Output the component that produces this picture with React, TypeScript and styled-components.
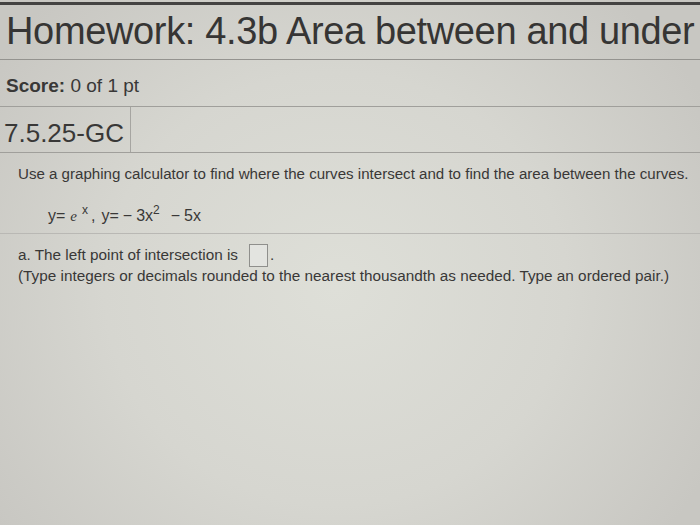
import React from 'react';
import styled, { createGlobalStyle } from 'styled-components';

const GlobalStyle = createGlobalStyle`
  html, body {
    margin: 0;
    padding: 0;
  }
  body {
    font-family: "Liberation Sans", Arial, sans-serif;
    color: #393837;
  }
`;

const Page = styled.div`
  min-height: 525px;
  width: 700px;
  overflow: hidden;
  padding-top: 2px;
  box-sizing: border-box;
  background: radial-gradient(ellipse 60% 75% at 48% 55%, #dedfd8 0%, #d6d6d0 55%, #c8c7c2 100%);
`;

const TitleBar = styled.div`
  border-top: 3px solid #444342;
  border-bottom: 1px solid #94938f;
  height: 58px;
  box-sizing: border-box;
  padding: 7px 0 0 6px;
`;

const Title = styled.h1`
  margin: 0;
  font-size: 38px;
  line-height: 38px;
  letter-spacing: -0.35px;
  font-weight: normal;
  color: #363534;
  white-space: nowrap;
`;

const ScoreBar = styled.div`
  border-bottom: 1px solid #a09f9b;
  height: 47px;
  box-sizing: border-box;
  padding: 16px 0 0 6px;
  font-size: 19px;
  line-height: 19px;
`;

const Bold = styled.b`
  font-weight: bold;
`;

const IdBar = styled.div`
  border-bottom: 1px solid #a09f9b;
  height: 46px;
  box-sizing: border-box;
  display: flex;
  align-items: stretch;
`;

const IdCell = styled.div`
  padding: 13px 6px 0 4px;
  font-size: 26px;
  line-height: 26px;
  border-right: 1px solid #a6a5a1;
`;

const Question = styled.div`
  padding: 12px 10px 7px 18px;
  line-height: 18px;
  border-bottom: 1px solid #b9b8b4;
`;

const Prompt = styled.p`
  margin: 0;
  font-size: 15.1px;
  white-space: nowrap;
`;

const Equation = styled.p`
  margin: 24px 0 0 30px;
  font-size: 16px;
  line-height: 18px;
  white-space: nowrap;
  display: flex;
  align-items: baseline;
`;

const Italic = styled.i`
  font-family: "Liberation Serif", serif;
  font-size: 15px;
  margin-left: 5px;
`;

const Sup = styled.span<{ $gap?: number }>`
  font-size: 12px;
  position: relative;
  top: -7px;
  margin-left: ${(p) => p.$gap ?? 0}px;
`;

const Sym = styled.span<{ $gap?: number }>`
  margin-left: ${(p) => p.$gap ?? 0}px;
`;

const Part = styled.div`
  padding: 10px 10px 0 18px;
  font-size: 15.3px;
`;

const Line = styled.div<{ $h: number }>`
  white-space: nowrap;
  display: flex;
  align-items: center;
  height: ${(p) => p.$h}px;
`;

const AnswerBox = styled.span`
  display: inline-block;
  width: 17px;
  height: 21px;
  border: 1px solid #8f8f8c;
  background: #e3e4e0;
  margin: 0 2px 0 11px;
`;

export default function App() {
  return (
    <>
      <GlobalStyle />
      <Page>
        <TitleBar>
          <Title>Homework: 4.3b Area between and under</Title>
        </TitleBar>
        <ScoreBar>
          <Bold>Score:</Bold> 0 of 1 pt
        </ScoreBar>
        <IdBar>
          <IdCell>7.5.25-GC</IdCell>
        </IdBar>
        <Question>
          <Prompt>Use a graphing calculator to find where the curves intersect and to find the area between the curves.</Prompt>
          <Equation>
            <Sym>y=</Sym>
            <Italic>e</Italic>
            <Sup $gap={5}>x</Sup>
            <Sym $gap={3}>,</Sym>
            <Sym $gap={6}>y=</Sym>
            <Sym $gap={4}>−</Sym>
            <Sym $gap={4}>3x</Sym>
            <Sup>2</Sup>
            <Sym $gap={11}>−</Sym>
            <Sym $gap={4}>5x</Sym>
          </Equation>
        </Question>
        <Part>
          <Line $h={22}>
            a. The left point of intersection is<AnswerBox />.
          </Line>
          <Line $h={20}>(Type integers or decimals rounded to the nearest thousandth as needed. Type an ordered pair.)</Line>
        </Part>
      </Page>
    </>
  );
}
